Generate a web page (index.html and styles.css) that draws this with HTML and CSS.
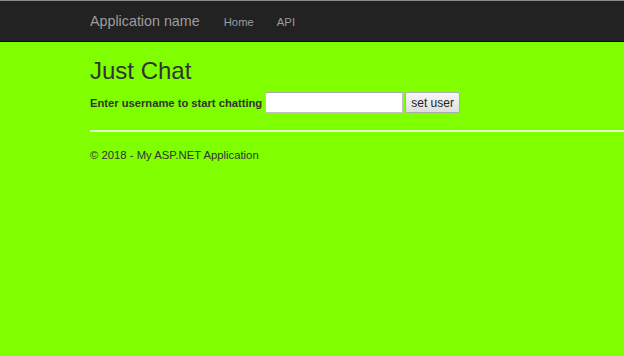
FILE: index.html
```html
<!DOCTYPE html>
<html lang="en">
<head>
    <meta charset="UTF-8">
    <meta name="viewport" content="width=device-width, initial-scale=1.0">
    <title>Just Chat - My ASP.NET Application</title>
    <link rel="stylesheet" href="styles.css">
</head>
<body>
    <!-- Barre de navigation -->
    <div class="navbar">
        <div class="navbar-inner">
            <a class="brand" href="#">Application name</a>
            <a class="nav-link" href="#">Home</a>
            <a class="nav-link" href="#">API</a>
        </div>
    </div>

    <div class="container">
        <h2>Just Chat</h2>

        <!-- Choix du pseudo -->
        <div class="user-row">
            <label for="username">Enter username to start chatting</label>
            <input type="text" id="username" name="username">
            <button type="button" id="setUser">set user</button>
        </div>

        <hr>

        <footer>
            <p>&copy; 2018 - My ASP.NET Application</p>
        </footer>
    </div>
</body>
</html>
```

FILE: styles.css
```css
body {
    font-family: "Liberation Sans", Arial, sans-serif;
    background-color: #7fff00;
    color: #333;
    margin: 0;
}

.navbar {
    background-color: #222;
    border-top: 1px solid #8c8c8c;
    border-bottom: 1px solid #080808;
    height: 40px;
}

.navbar-inner {
    display: flex;
    align-items: baseline;
    padding-left: 90px;
}

.navbar a {
    color: #9d9d9d;
    text-decoration: none;
}

.brand {
    font-size: 14.3px;
    line-height: 41px;
}

.nav-link {
    font-size: 11.3px;
    margin-left: 24px;
}

.nav-link + .nav-link {
    margin-left: 23px;
}

.container {
    padding-left: 90px;
}

h2 {
    font-size: 24px;
    font-weight: normal;
    line-height: 26px;
    margin: 16px 0 0;
}

.user-row {
    display: flex;
    align-items: center;
    height: 21px;
    margin-top: 8px;
}

label {
    font-size: 11.2px;
    font-weight: bold;
    margin-right: 3px;
}

input[type="text"] {
    width: 138px;
    height: 21px;
    padding: 1px 3px;
    border: 1px solid #c2c2c2;
    border-top-color: #a9a9a9;
    background-color: #fff;
    box-sizing: border-box;
    margin: 0;
}

button {
    font-family: "Liberation Sans", Arial, sans-serif;
    font-size: 12px;
    color: #222;
    height: 21px;
    padding: 0 5px;
    margin: 0 0 0 2px;
    border: 1px solid #adadad;
    border-radius: 2px;
    background: linear-gradient(#f6f6f6, #dedede);
    cursor: pointer;
}

hr {
    border: 0;
    border-top: 2px solid #e3f7c6;
    margin: 17px 0 0;
}

footer p {
    font-size: 11.3px;
    line-height: 15px;
    margin: 16px 0 0;
}
```
